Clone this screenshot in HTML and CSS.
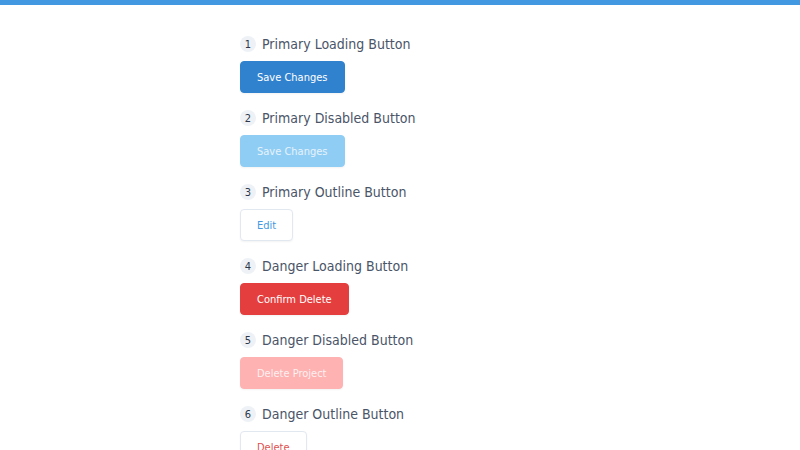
FILE: index.html
```html
<!DOCTYPE html>
<html>
<head>
<meta charset="utf-8">
<link rel="stylesheet" href="styles.css">
</head>
<body>
<div class="topbar"></div>
<main class="list">
  <section class="item">
    <div class="head"><span class="num">1</span><span class="title">Primary Loading Button</span></div>
    <button class="btn primary">Save Changes</button>
  </section>
  <section class="item">
    <div class="head"><span class="num">2</span><span class="title">Primary Disabled Button</span></div>
    <button class="btn primary-disabled">Save Changes</button>
  </section>
  <section class="item">
    <div class="head"><span class="num">3</span><span class="title">Primary Outline Button</span></div>
    <button class="btn primary-outline">Edit</button>
  </section>
  <section class="item">
    <div class="head"><span class="num">4</span><span class="title">Danger Loading Button</span></div>
    <button class="btn danger">Confirm Delete</button>
  </section>
  <section class="item">
    <div class="head"><span class="num">5</span><span class="title">Danger Disabled Button</span></div>
    <button class="btn danger-disabled">Delete Project</button>
  </section>
  <section class="item">
    <div class="head"><span class="num">6</span><span class="title">Danger Outline Button</span></div>
    <button class="btn danger-outline">Delete</button>
  </section>
</main>
</body>
</html>
```
FILE: styles.css
```css
html, body {
  margin: 0;
  padding: 0;
  background: #ffffff;
  font-family: "DejaVu Sans Condensed", "DejaVu Sans", sans-serif;
}
.topbar {
  height: 5px;
  background: #4299e1;
}
.list {
  width: 320px;
  margin: 0 auto;
  padding-top: 29px;
  display: flex;
  flex-direction: column;
  gap: 15px;
}
.item {
  display: flex;
  flex-direction: column;
  align-items: flex-start;
  gap: 7px;
}
.head {
  height: 20px;
  display: flex;
  align-items: center;
  gap: 6px;
}
.num {
  width: 16px;
  height: 16px;
  border-radius: 50%;
  background: #eef2f6;
  color: #2d3748;
  font-size: 11px;
  display: flex;
  align-items: center;
  justify-content: center;
}
.title {
  font-size: 14px;
  color: #4a5568;
}
.btn {
  height: 32px;
  padding: 0 16px;
  border-radius: 4px;
  border: 1px solid transparent;
  font-family: "DejaVu Sans Condensed", "DejaVu Sans", sans-serif;
  font-size: 11px;
  cursor: pointer;
  box-shadow: 0 1px 2px rgba(0, 0, 0, 0.05);
}
.primary { background: #3182ce; color: #ffffff; border-color: #3182ce; }
.primary-disabled { background: #90cdf4; color: #e6f3fc; border-color: #90cdf4; }
.primary-outline { background: #ffffff; color: #4299e1; border-color: #e2e8f0; }
.danger { background: #e53e3e; color: #ffffff; border-color: #e53e3e; }
.danger-disabled { background: #feb2b2; color: #fff0f0; border-color: #feb2b2; }
.danger-outline { background: #ffffff; color: #e05050; border-color: #e2e8f0; }
```
